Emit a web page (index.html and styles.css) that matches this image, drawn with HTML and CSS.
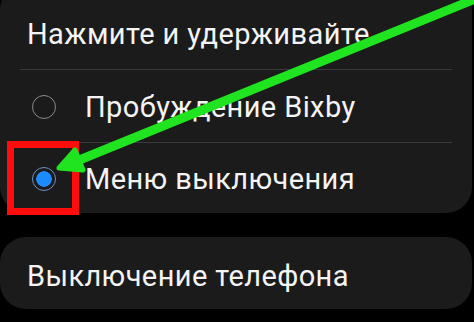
FILE: index.html
```html
<!DOCTYPE html>
<html>
<head>
<title>Боковая клавиша</title>
<link rel="stylesheet" href="styles.css">
</head>
<body>

<div id="screen">
    <div class="card options">
        <div class="title">Нажмите и удерживайте</div>
        <div class="option">
            <span class="radio"></span>
            <span class="label">Пробуждение Bixby</span>
        </div>
        <div class="option">
            <span class="radio checked"></span>
            <span class="label">Меню выключения</span>
        </div>
    </div>

    <div class="card single">
        <span class="label">Выключение телефона</span>
    </div>

    <!-- annotation drawn over the screenshot -->
    <div class="highlight"></div>
    <svg class="arrow" width="474" height="322" viewBox="0 0 474 322">
        <line x1="480" y1="-3" x2="72" y2="163" stroke="#1fe41f" stroke-width="9" stroke-linecap="round"/>
        <polygon points="59,168 75,150 83,170" fill="#1fe41f" stroke="#1fe41f" stroke-width="5" stroke-linejoin="round"/>
    </svg>
</div>

</body>
</html>
```

FILE: styles.css
```css
/* Dark settings list */
body {
    margin: 0;
    background: #000;
    font-family: Roboto, "Noto Sans", sans-serif;
    color: #f4f4f4;
}

#screen {
    position: relative;
    width: 474px;
    height: 322px;
    overflow: hidden;
}

.card {
    width: 472px;
    background: #1b1b1b;
    border-radius: 26px;
    box-sizing: border-box;
    font-size: 29px;
    letter-spacing: 0.4px;
}

.options {
    margin-top: -16px;
    padding: 0 20px;
}

.title {
    height: 86px;
    box-sizing: border-box;
    padding: 34px 0 0 7px;
    line-height: 32px;
    border-bottom: 1px solid #3a3a3a;
}

.option {
    display: flex;
    align-items: center;
    height: 72px;
    padding: 2px 0 0 12px;
    box-sizing: border-box;
}

.option + .option {
    border-top: 1px solid #3a3a3a;
    height: 71px;
}

.radio {
    width: 24px;
    height: 24px;
    box-sizing: border-box;
    border: 1.5px solid #8a8a8a;
    border-radius: 50%;
    margin-right: 29px;
    flex-shrink: 0;
}

.radio.checked {
    border-color: #6f93bd;
    background: radial-gradient(circle, #1c8bff 0 7.5px, #1b1b1b 8px);
}

.single {
    margin-top: 24px;
    height: 72px;
    display: flex;
    align-items: center;
    padding: 6px 0 0 27px;
}

.highlight {
    position: absolute;
    left: 7px;
    top: 141px;
    width: 72px;
    height: 74px;
    box-sizing: border-box;
    border: 7px solid #ff0d0d;
}

.arrow {
    position: absolute;
    left: 0;
    top: 0;
}
```
